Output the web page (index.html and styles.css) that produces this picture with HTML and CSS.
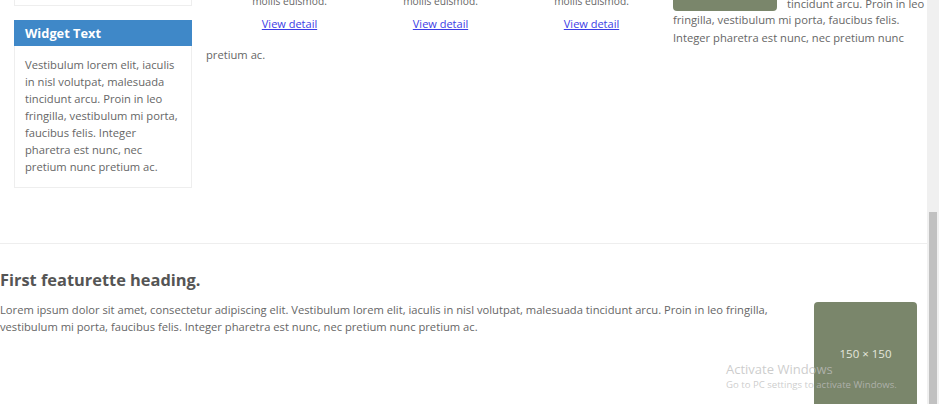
FILE: index.html
```html
<!DOCTYPE html>
<html>
<head>
<meta charset="utf-8">
<link rel="stylesheet" href="styles.css">
</head>
<body>
<div class="page">
  <div class="content">
    <div class="top">
      <aside class="sidebar">
        <div class="box-stub"></div>
        <div class="widget">
          <h3 class="widget-title">Widget Text</h3>
          <p class="widget-body">Vestibulum lorem elit, iaculis in nisl volutpat, malesuada tincidunt arcu. Proin in leo fringilla, vestibulum mi porta, faucibus felis. Integer pharetra est nunc, nec pretium nunc pretium ac.</p>
        </div>
      </aside>
      <main class="main">
        <div class="main-row">
          <div class="thumbs">
            <div class="thumb"><p class="cap">mollis euismod.</p><a href="#" class="link">View detail</a></div>
            <div class="thumb"><p class="cap">mollis euismod.</p><a href="#" class="link">View detail</a></div>
            <div class="thumb"><p class="cap">mollis euismod.</p><a href="#" class="link">View detail</a></div>
          </div>
          <div class="media">
            <div class="media-top">
              <div class="img-stub"></div>
              <span class="media-first">tincidunt arcu. Proin in leo</span>
            </div>
            <p class="media-text">fringilla, vestibulum mi porta, faucibus felis. Integer pharetra est nunc, nec pretium nunc</p>
          </div>
        </div>
        <p class="tail">pretium ac.</p>
      </main>
    </div>
    <hr class="divider">
    <section class="featurette">
      <div class="feat-text">
        <h2 class="feat-heading">First featurette heading.</h2>
        <p class="feat-body">Lorem ipsum dolor sit amet, consectetur adipiscing elit. Vestibulum lorem elit, iaculis in nisl volutpat, malesuada tincidunt arcu. Proin in leo fringilla, vestibulum mi porta, faucibus felis. Integer pharetra est nunc, nec pretium nunc pretium ac.</p>
      </div>
      <div class="feat-img"><span>150 × 150</span></div>
    </section>
  </div>
  <div class="scrollbar"><div class="thumb-bar"></div></div>
  <div class="watermark">
    <div class="wm-title">Activate Windows</div>
    <div class="wm-sub">Go to PC settings to activate Windows.</div>
  </div>
</div>
</body>
</html>
```
FILE: styles.css
```css
html, body {
  margin: 0;
  padding: 0;
  background: #fff;
  overflow: hidden;
}
body {
  font-family: "Open Sans", "Liberation Sans", sans-serif;
  color: #666;
  font-size: 11.2px;
}
.page {
  width: 939px;
  height: 404px;
  display: flex;
  position: relative;
  overflow: hidden;
}
.content {
  width: 927px;
  flex: none;
}
.top {
  display: flex;
  height: 243px;
}
.sidebar {
  width: 178px;
  margin-left: 14px;
  flex: none;
}
.box-stub {
  height: 5px;
  border: 1px solid #eee;
  border-top: none;
}
.widget {
  margin-top: 14px;
  border: 1px solid #eee;
  border-top: none;
}
.widget-title {
  background: #3f88c8;
  color: #fff;
  font-size: 12.8px;
  font-weight: 700;
  line-height: 26px;
  padding-left: 11px;
  margin: 0 -1px;
}
.widget-body {
  margin: 0;
  padding: 10px 10px 12px 10px;
  line-height: 17px;
}
.main {
  margin-left: 14px;
  flex: 1;
}
.main-row {
  display: flex;
  margin-top: -8px;
}
.thumbs {
  display: flex;
  margin-left: 8px;
}
.thumb {
  width: 151px;
  text-align: center;
}
.cap {
  margin: 0 0 6px;
  line-height: 18px;
  font-size: 10.2px;
}
.link {
  color: #3c3ce6;
  font-size: 11px;
  text-decoration: underline;
}
.media {
  margin-left: 6px;
  width: 254px;
  line-height: 17.5px;
}
.media-top {
  display: flex;
  align-items: flex-end;
  margin-top: -3px;
}
.img-stub {
  width: 104px;
  height: 22px;
  background: #7a866b;
  border-radius: 0 0 4px 4px;
  margin-right: 10px;
}
.media-first {
  line-height: 17.5px;
  margin-bottom: -1px;
}
.media-text {
  margin: 0;
}
.tail {
  margin: 0;
  line-height: 18px;
}
.divider {
  margin: 0;
  border: none;
  border-top: 1px solid #eeeeee;
}
.featurette {
  display: flex;
  justify-content: space-between;
  padding-top: 24px;
}
.feat-text {
  width: 790px;
}
.feat-heading {
  margin: 0 0 9px;
  font-size: 16.4px;
  font-weight: 700;
  color: #555;
  line-height: 24px;
}
.feat-body {
  margin: 0;
  line-height: 17px;
}
.feat-img {
  width: 103px;
  height: 150px;
  margin-top: 34px;
  margin-right: 10px;
  background: #7a866b;
  border-radius: 4px;
  display: flex;
  justify-content: center;
  padding-top: 44px;
  box-sizing: border-box;
  color: #e4e6dc;
  font-size: 11.5px;
}
.scrollbar {
  width: 12px;
  background: #f0f0f0;
  flex: none;
  display: flex;
  flex-direction: column;
  justify-content: flex-end;
}
.thumb-bar {
  margin: 0 2px;
  height: 192px;
  background: #c1c1c1;
}
.watermark {
  position: absolute;
  left: 726px;
  top: 361px;
  color: rgba(190, 190, 190, 0.78);
}
.wm-title {
  font-size: 13px;
  line-height: 16px;
}
.wm-sub {
  font-size: 9.6px;
  line-height: 16px;
}
```
